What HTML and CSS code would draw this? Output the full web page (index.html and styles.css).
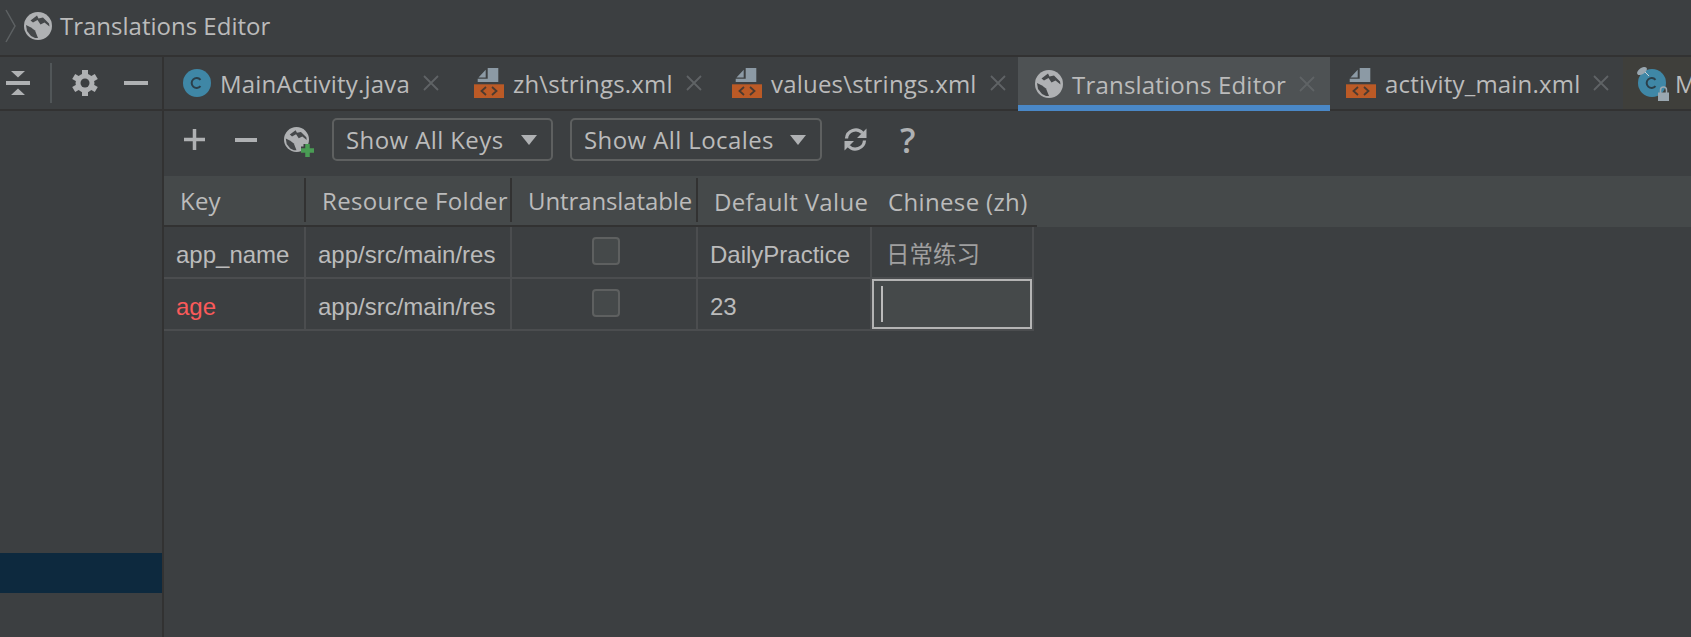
FILE: index.html
```html
<!DOCTYPE html>
<html lang="en">
<head>
<meta charset="utf-8">
<title>Translations Editor</title>
<link rel="stylesheet" href="styles.css">
</head>
<body>
<svg class="defs" width="0" height="0" aria-hidden="true">
  <defs>
    <symbol id="globe" viewBox="0 0 28 28">
      <circle cx="14" cy="14" r="14" fill="#afb1b3"/>
      <path d="M6.500 8.500 13 3.500 14.500 6.500 19 5.500 25 11.500 25.500 14.500 20.500 10.500 16.500 12.500 13.500 8 9 10.500Z" fill="#45484a"/>
      <path d="M2 13 7 15.500 11 18.500 14 26 11 26 7 24 3 19Z" fill="#45484a"/>
    </symbol>
    <symbol id="xml" viewBox="0 0 30 30">
      <path d="M13.700 0H24.300V14H3.700V10.700H13.700Z" fill="#8c9aa5"/>
      <path d="M4.500 9.500 11.700 9.500V1.700Z" fill="#8c9aa5"/>
      <rect x="0" y="16.300" width="30" height="13.700" fill="#bb5a26"/>
      <path d="M12 19 7.500 23 12 27M18 19 22.500 23 18 27" fill="none" stroke="#4a3a30" stroke-width="1.800"/>
    </symbol>
    <symbol id="close" viewBox="0 0 16 16">
      <path d="M1 1 15 15M15 1 1 15" stroke="#5f6365" stroke-width="1.800" fill="none"/>
    </symbol>
    <symbol id="cls" viewBox="0 0 28 28">
      <circle cx="14" cy="14" r="14" fill="#3f87a6"/>
      <path d="M17.500 10.800A5 5 0 1 0 17.500 17.200" fill="none" stroke="#2b3f4a" stroke-width="2"/>
    </symbol>
  </defs>
</svg>

<header class="crumbs">
  <svg class="chevron" width="12" height="34" viewBox="0 0 12 34"><path d="M1 1 10 17 1 33" fill="none" stroke="#5d6163" stroke-width="1.500"/></svg>
  <svg class="globe"><use href="#globe"/></svg>
  <span class="crumb-text">Translations Editor</span>
</header>

<div class="workspace">
  <aside class="side">
    <div class="side-tools">
      <svg class="tool-collapse" width="24" height="24" viewBox="0 0 24 24"><path d="M5 0h14l-7 6.500zM0 10h24v4H0zM5 24h14l-7-6.500z" fill="#afb1b3"/></svg>
      <span class="side-sep"></span>
      <svg class="tool-gear" width="26" height="26" viewBox="0 0 26 26"><circle cx="13" cy="13" r="9.500" fill="#afb1b3"/><path d="M13 0v26M1.700 6.500 24.300 19.500M1.700 19.500 24.300 6.500" stroke="#afb1b3" stroke-width="6"/><circle cx="13" cy="13" r="4.500" fill="#3c3f41"/></svg>
      <span class="tool-dash"></span>
    </div>
    <div class="side-body">
      <div class="side-selected"></div>
    </div>
  </aside>

  <main class="main">
    <nav class="tabs">
      <div class="tab tab-java"><svg class="tab-icon round"><use href="#cls"/></svg><span>MainActivity.java</span><svg class="x"><use href="#close"/></svg></div>
      <div class="tab tab-zh"><svg class="tab-icon"><use href="#xml"/></svg><span>zh\strings.xml</span><svg class="x"><use href="#close"/></svg></div>
      <div class="tab tab-val"><svg class="tab-icon"><use href="#xml"/></svg><span>values\strings.xml</span><svg class="x"><use href="#close"/></svg></div>
      <div class="tab tab-active"><svg class="tab-icon round"><use href="#globe"/></svg><span>Translations Editor</span><svg class="x"><use href="#close"/></svg></div>
      <div class="tab tab-act"><svg class="tab-icon"><use href="#xml"/></svg><span>activity_main.xml</span><svg class="x"><use href="#close"/></svg></div>
      <div class="tab tab-locked">
        <span class="locked-icon">
          <svg class="tab-icon round"><use href="#cls"/></svg>
          <svg class="pin" width="14" height="14" viewBox="0 0 14 14"><ellipse cx="6" cy="6" rx="5.500" ry="3.200" transform="rotate(-35 6 6)" fill="#9aa7b0"/><path d="M9 7 13 11" stroke="#c9d2d8" stroke-width="1"/></svg>
          <svg class="lock" width="11" height="15" viewBox="0 0 11 15"><path d="M2.500 7V4a3 3 0 0 1 6 0v3" fill="none" stroke="#9aa7b0" stroke-width="1.500"/><rect y="6.500" width="11" height="8.500" fill="#9aa7b0"/></svg>
        </span>
        <span>M</span>
      </div>
    </nav>

    <div class="toolbar">
      <svg class="t-plus" width="21" height="21" viewBox="0 0 21 21"><path d="M0 10.500h21M10.500 0v21" stroke="#afb1b3" stroke-width="3.500"/></svg>
      <span class="t-minus"></span>
      <span class="t-globe">
        <svg class="globe-sm"><use href="#globe"/></svg>
        <svg class="plus-green" width="17" height="17" viewBox="0 0 17 17"><path d="M2 8.500h13M8.500 2v13" stroke="#3c3f41" stroke-width="8"/><path d="M2 8.500h13M8.500 2v13" stroke="#499c54" stroke-width="4.500"/></svg>
      </span>
      <div class="combo combo-keys"><span>Show All Keys</span><i class="caret"></i></div>
      <div class="combo combo-loc"><span>Show All Locales</span><i class="caret"></i></div>
      <svg class="t-refresh" width="25" height="25" viewBox="0 0 25 25"><path d="M3.500 11.500A9.200 9.200 0 0 1 19.500 6M21.500 13.500A9.200 9.200 0 0 1 5.500 19" fill="none" stroke="#afb1b3" stroke-width="3.200"/><path d="M23.500 1.500v9.500h-9.500zM1.500 23.500V14h9.500z" fill="#afb1b3"/></svg>
      <span class="t-help">?</span>
    </div>

    <div class="header-row">
      <div class="grid head">
        <div class="hc hc-line">Key</div>
        <div class="hc hc-line hc-wide">Resource Folder</div>
        <div class="hc hc-line hc-tight">Untranslatable</div>
        <div class="hc hc-wide">Default Value</div>
        <div class="hc hc-wide">Chinese (zh)</div>
      </div>
    </div>

    <div class="grid body">
      <div class="c">app_name</div>
      <div class="c">app/src/main/res</div>
      <div class="c c-check"><span class="check"></span></div>
      <div class="c">DailyPractice</div>
      <div class="c c-zh">日常练习</div>

      <div class="c c-red">age</div>
      <div class="c">app/src/main/res</div>
      <div class="c c-check"><span class="check"></span></div>
      <div class="c">23</div>
      <div class="c c-edit"><div class="edit-box"><span class="cursor"></span></div></div>
    </div>
  </main>
</div>
</body>
</html>
```
FILE: styles.css
```css
* { box-sizing: border-box; }
html, body { margin: 0; height: 100%; }
body {
  width: 1691px;
  height: 637px;
  overflow: hidden;
  background: #3c3f41;
  color: #bbbbbb;
  font-family: "Open Sans", "Noto Sans", sans-serif;
  font-size: 24px;
  display: flex;
  flex-direction: column;
}
.defs { position: absolute; }

.crumbs {
  height: 57px;
  flex: none;
  border-bottom: 2px solid #323232;
  display: flex;
  align-items: center;
  padding: 0 0 4px 5px;
}
.globe { width: 28px; height: 28px; margin-left: 7px; }
.crumb-text { margin-left: 8px; }

.workspace { flex: 1; display: flex; min-height: 0; }

.side {
  width: 164px;
  flex: none;
  border-right: 2px solid #323232;
  display: flex;
  flex-direction: column;
}
.side-tools {
  height: 54px;
  flex: none;
  border-bottom: 2px solid #323232;
  display: flex;
  align-items: center;
  padding-left: 6px;
}
.side-sep { width: 2px; height: 40px; background: #515658; margin-left: 20px; }
.tool-gear { margin-left: 20px; }
.tool-dash { width: 24px; height: 4px; background: #afb1b3; margin-left: 26px; }
.side-body { flex: 1; padding-top: 442px; }
.side-selected { height: 40px; background: #0d293e; }

.main { flex: 1; min-width: 0; display: flex; flex-direction: column; }

.tabs {
  height: 54px;
  flex: none;
  border-bottom: 2px solid #323232;
  display: flex;
  overflow-x: clip;
  letter-spacing: .2px;
}
.tab {
  display: flex;
  align-items: center;
  flex: none;
  white-space: nowrap;
}
.tab-icon { width: 30px; height: 30px; flex: none; }
.tab-icon.round { width: 28px; height: 28px; }
.x { width: 16px; height: 16px; margin-left: 13px; flex: none; }
.tab span { margin-left: 9px; }
.tab .locked-icon { margin-left: 0; }
.tab-java { width: 295px; padding-left: 19px; }
.tab-zh { width: 258px; padding-left: 15px; }
.tab-val { width: 301px; padding-left: 15px; }
.tab-active {
  width: 312px;
  padding-left: 17px;
  background: #4e5254;
  border-bottom: 6px solid #4a88c7;
  padding-top: 6px;
  margin-bottom: -2px;
}
.tab-act { width: 293px; padding-left: 16px; }
.tab-locked { flex: 1 1 0; min-width: 0; background: #3f3f3b; padding-left: 15px; }
.locked-icon { position: relative; display: block; width: 28px; height: 28px; flex: none; }
.pin { position: absolute; left: -2px; top: -4px; }
.lock { position: absolute; right: -3px; bottom: -4px; }

.toolbar {
  height: 65px;
  flex: none;
  display: flex;
  align-items: center;
  padding: 0 0 8px 20px;
}
.t-minus { width: 22px; height: 4px; background: #afb1b3; margin-left: 30px; }
.t-globe { position: relative; display: block; width: 25px; height: 25px; margin-left: 27px; }
.globe-sm { width: 25px; height: 25px; display: block; }
.plus-green { position: absolute; right: -7px; bottom: -7px; }
.combo {
  height: 43px;
  border: 2px solid #5e6060;
  border-radius: 5px;
  display: flex;
  align-items: center;
  justify-content: space-between;
  padding: 0 14px 0 12px;
  letter-spacing: .4px;
}
.combo-keys { width: 221px; margin-left: 23px; }
.combo-loc { width: 252px; margin-left: 17px; }
.caret {
  width: 0; height: 0;
  border-left: 8.500px solid transparent;
  border-right: 8.500px solid transparent;
  border-top: 10px solid #afb1b3;
}
.t-refresh { margin-left: 21px; }
.t-help { margin-left: 32px; font-weight: 600; color: #afb1b3; font-size: 34px; line-height: 1; }

.grid {
  display: grid;
  grid-template-columns: 142px 206px 186px 174px 162px;
  width: 870px;
}
.header-row {
  height: 51px;
  flex: none;
  background: #45494a;
}
.head { border-bottom: 2px solid #323232; height: 51px; padding: 2px 0 1px; letter-spacing: .2px; width: 873px; }
.hc {
  padding-left: 16px;
  display: flex;
  align-items: center;
  white-space: nowrap;
  overflow: hidden;
}
.hc-wide { letter-spacing: .35px; }
.hc-tight { letter-spacing: -.1px; }
.hc-line { border-right: 2px solid #323232; margin-bottom: 2px; }

.body {
  font-family: "Liberation Sans", Arial, sans-serif;
  font-size: 24px;
  grid-auto-rows: 52px;
  height: 104px;
}
.c {
  display: flex;
  align-items: center;
  padding-left: 12px;
  padding-top: 6px;
  border-right: 2px solid #4b4d4f;
  border-bottom: 2px solid #4b4d4f;
  white-space: nowrap;
  overflow: hidden;
}
.c-red { color: #fa5a5a; }
.c-check { justify-content: center; padding: 0 0 3px 4px; }
.check {
  width: 28px; height: 28px;
  border: 2px solid #5e6060;
  border-radius: 4px;
  background: #45494a;
}
.c-zh { font-family: "Noto Sans CJK SC", sans-serif; font-size: 23.500px; color: #a0a0a0; padding-left: 14px; padding-top: 2px; }
.c-edit { padding: 0; align-items: stretch; }
.edit-box {
  flex: 1;
  background: #45494a;
  border: 2px solid #b4b4b4;
  display: flex;
  align-items: center;
  padding-left: 7px;
}
.cursor { width: 2px; height: 36px; background: #bbbbbb; }
```
